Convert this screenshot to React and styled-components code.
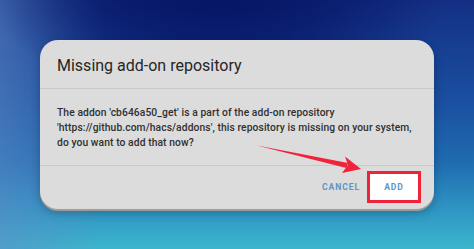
import React from "react";
import styled, { createGlobalStyle } from "styled-components";

const GlobalStyle = createGlobalStyle`
  html, body {
    margin: 0;
    padding: 0;
  }
  body {
    font-family: Roboto, "Liberation Sans", sans-serif;
  }
`;

const Page = styled.div`
  position: relative;
  width: 474px;
  height: 249px;
  overflow: hidden;
  padding: 40px 40px 0 40px;
  box-sizing: border-box;
  background:
    radial-gradient(ellipse 230px 120px at 220px -10px, #061464 0%, rgba(6, 20, 100, 0.7) 45%, rgba(6, 20, 100, 0) 100%),
    linear-gradient(90deg, rgba(95, 140, 200, 0.55) 0%, rgba(95, 140, 200, 0) 22%),
    linear-gradient(180deg, #142f85 0%, #1a4f9f 40%, #1f6bb0 65%, #2f97c4 85%, #3db6cc 100%);
`;

const Dialog = styled.div`
  width: 394px;
  height: 169px;
  background: #dcdcdc;
  border-radius: 18px;
  box-shadow: 0 2px 0 #9c9c9c, 0 4px 10px rgba(0, 0, 0, 0.25);
  display: flex;
  flex-direction: column;
  overflow: hidden;
`;

const Header = styled.div`
  height: 46px;
  border-bottom: 1px solid #c8c8c8;
  display: flex;
  align-items: center;
  padding: 2px 17px 0;
`;

const Title = styled.h2`
  margin: 0;
  font-size: 16px;
  font-weight: 400;
  color: #262626;
  letter-spacing: 0;
`;

const Body = styled.div`
  height: 77px;
  border-bottom: 1px solid #c8c8c8;
  padding: 17px 17px 0;
  box-sizing: border-box;
`;

const Text = styled.p`
  margin: 0;
  font-size: 10.3px;
  line-height: 14.8px;
  color: #303030;
  font-weight: 500;
  letter-spacing: 0.08px;
`;

const Footer = styled.div`
  flex: 1;
  display: flex;
  align-items: center;
  justify-content: flex-end;
  gap: 4px;
  padding: 0 13px 2px 0;
`;

const Button = styled.button`
  border: ${(p) => (p.$marked ? "3px solid #f0233a" : "none")};
  background: ${(p) => (p.$marked ? "#ffffff" : "transparent")};
  color: #5a95c6;
  font-family: Roboto, "Liberation Sans", sans-serif;
  font-weight: 700;
  font-size: 8.6px;
  letter-spacing: 0.9px;
  width: ${(p) => (p.$marked ? "54px" : "auto")};
  height: 32px;
  padding: ${(p) => (p.$marked ? "0" : "0 3px")};
  box-sizing: border-box;
  text-align: center;
`;

const Arrow = styled.svg`
  position: absolute;
  left: 0;
  top: 0;
  pointer-events: none;
`;

export default function App() {
  return (
    <>
      <GlobalStyle />
      <Page>
        <Dialog>
          <Header>
            <Title>Missing add-on repository</Title>
          </Header>
          <Body>
            <Text>
              The addon 'cb646a50_get' is a part of the add-on repository
              <br />
              'https://github.com/hacs/addons', this repository is missing on your system,
              <br />
              do you want to add that now?
            </Text>
          </Body>
          <Footer>
            <Button>CANCEL</Button>
            <Button $marked>ADD</Button>
          </Footer>
        </Dialog>
        <Arrow width="474" height="249" viewBox="0 0 474 249">
          <path d="M257 145.5 L348 163 L346.5 168 Z" fill="#f0233a" />
          <path d="M361 169 L345 156.5 L348 165 L342 173 Z" fill="#f0233a" />
        </Arrow>
      </Page>
    </>
  );
}
